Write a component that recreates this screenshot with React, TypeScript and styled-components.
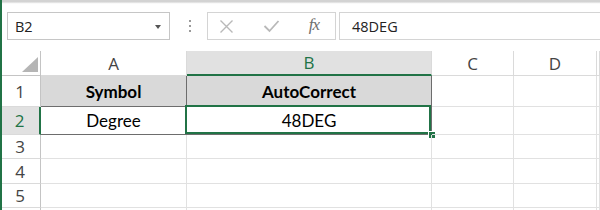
import React from "react";
import styled, { createGlobalStyle, css } from "styled-components";

const green = "#217346";
const grid = "#e1e1e1";
const tableLine = "#6d6d6d";

const GlobalStyle = createGlobalStyle`
  html, body {
    margin: 0;
    padding: 0;
    background: #fff;
    width: 600px;
    height: 210px;
    overflow: hidden;
  }
`;

const Window = styled.div`
  height: 210px;
  border-left: 2px solid ${green};
  background: #fff;
  overflow: hidden;
`;

const TopEdge = styled.div`
  height: 4px;
  background: linear-gradient(#d3d3d3, #d3d3d3 2px, #f4f4f4 3px, #fff);
`;

const FormulaBar = styled.div`
  display: flex;
  align-items: center;
  height: 28px;
  margin-top: 8px;
  padding-left: 5px;
  font-family: "Open Sans", "Noto Sans", sans-serif;
  font-size: 14.5px;
  color: #222;
`;

const NameBox = styled.div`
  box-sizing: border-box;
  width: 163px;
  height: 28px;
  border: 1px solid #c6c6c6;
  display: flex;
  align-items: center;
  justify-content: space-between;
  padding: 0 8px 0 7px;
`;

const DropArrow = styled.div`
  width: 0;
  height: 0;
  border-left: 3.5px solid transparent;
  border-right: 3.5px solid transparent;
  border-top: 4px solid #555;
  margin-top: 1px;
`;

const Grip = styled.div`
  width: 35px;
  display: flex;
  flex-direction: column;
  align-items: center;
  gap: 3px;
  padding-left: 2px;
`;

const GripDot = styled.span`
  width: 2px;
  height: 2px;
  background: #9a9a9a;
`;

const FxButtons = styled.div`
  box-sizing: border-box;
  width: 129px;
  height: 28px;
  border: 1px solid #d4d4d4;
  display: flex;
  align-items: center;
  padding: 0 16px 0 11px;
  justify-content: space-between;
`;

const FxLabel = styled.span`
  font-family: "Liberation Serif", "DejaVu Serif", serif;
  font-style: italic;
  font-size: 17px;
  color: #6e6e6e;
  letter-spacing: -1px;
  margin-top: -2px;
`;

const FormulaInput = styled.div`
  box-sizing: border-box;
  flex: 1;
  height: 28px;
  margin-left: 3px;
  border: 1px solid #d4d4d4;
  border-right: none;
  display: flex;
  align-items: center;
  padding-left: 12px;
`;

const Sheet = styled.div`
  margin-top: 11px;
  display: grid;
  grid-template-columns: 39px 146px 245px 82px 83px 1fr;
  grid-template-rows: 25px 31px 28px 24px 25px 24px 10px;
`;

const HeadCell = styled.div<{ $active?: boolean; $row?: boolean }>`
  box-sizing: border-box;
  display: flex;
  align-items: center;
  justify-content: center;
  font-family: "Open Sans", "Noto Sans", sans-serif;
  font-size: 17px;
  color: #444;
  background: #fff;
  border-right: 1px solid #dadada;
  border-bottom: 1px solid #dadada;
  ${(p) =>
    p.$row &&
    css`
      border-right: 1px solid #c4c4c4;
      padding-right: 2px;
    `}
  ${(p) =>
    p.$active &&
    css`
      background: #e1e1e1;
      color: ${green};
    `}
  ${(p) =>
    p.$active &&
    !p.$row &&
    css`
      border-bottom: 2px solid ${green};
    `}
  ${(p) =>
    p.$active &&
    p.$row &&
    css`
      border-right: 2px solid ${green};
    `}
`;

const Corner = styled(HeadCell)`
  align-items: flex-end;
  justify-content: flex-end;
  padding: 0 2px 3px 0;
  border-bottom: 1px solid #c4c4c4;
  border-right: 1px solid #c4c4c4;
`;

const Cell = styled.div<{ $head?: boolean; $boxed?: boolean }>`
  box-sizing: border-box;
  position: relative;
  display: flex;
  align-items: center;
  justify-content: center;
  font-family: "Lato", "Open Sans", sans-serif;
  font-size: 17px;
  color: #000;
  border-right: 1px solid ${grid};
  border-bottom: 1px solid ${grid};
  ${(p) =>
    p.$head &&
    css`
      background: #d9d9d9;
      font-weight: 700;
    `}
  ${(p) =>
    p.$boxed &&
    css`
      border-right-color: ${tableLine};
      border-bottom-color: ${tableLine};
    `}
`;

const Selection = styled.div`
  position: absolute;
  left: -2px;
  top: -2px;
  right: 0;
  bottom: 0;
  border: 2px solid ${green};
  pointer-events: none;
`;

const FillHandle = styled.div`
  position: absolute;
  right: -4px;
  bottom: -4px;
  width: 6px;
  height: 6px;
  background: ${green};
  border-top: 1px solid #fff;
  border-left: 1px solid #fff;
`;

const Icon = ({ kind }: { kind: "x" | "check" }) =>
  kind === "x" ? (
    <svg width="15" height="15" viewBox="0 0 15 15">
      <path d="M1.5 1.5 L13.5 13.5 M13.5 1.5 L1.5 13.5" stroke="#b9b9b9" strokeWidth="1.4" fill="none" />
    </svg>
  ) : (
    <svg width="17" height="14" viewBox="0 0 17 14">
      <path d="M1.5 7 L6.5 12 L15.5 2" stroke="#b9b9b9" strokeWidth="1.8" fill="none" />
    </svg>
  );

const columns = ["A", "B", "C", "D", ""];
const rows = ["3", "4", "5", ""];

export default function App() {
  return (
    <>
      <GlobalStyle />
      <Window>
        <TopEdge />
        <FormulaBar>
          <NameBox>
            <span>B2</span>
            <DropArrow />
          </NameBox>
          <Grip>
            <GripDot />
            <GripDot />
            <GripDot />
          </Grip>
          <FxButtons>
            <Icon kind="x" />
            <Icon kind="check" />
            <FxLabel>fx</FxLabel>
          </FxButtons>
          <FormulaInput>48DEG</FormulaInput>
        </FormulaBar>
        <Sheet>
          <Corner>
            <svg width="16" height="15" viewBox="0 0 16 15">
              <polygon points="16,0 16,15 0,15" fill="#b5b5b5" />
            </svg>
          </Corner>
          {columns.map((c) => (
            <HeadCell key={c || "end"} $active={c === "B"}>
              {c}
            </HeadCell>
          ))}

          <HeadCell $row>1</HeadCell>
          <Cell $head $boxed>Symbol</Cell>
          <Cell $head $boxed>AutoCorrect</Cell>
          <Cell />
          <Cell />
          <Cell />

          <HeadCell $row $active>2</HeadCell>
          <Cell $boxed>Degree</Cell>
          <Cell $boxed>
            48DEG
            <Selection />
            <FillHandle />
          </Cell>
          <Cell />
          <Cell />
          <Cell />

          {rows.map((r, i) => (
            <React.Fragment key={i}>
              <HeadCell $row>{r}</HeadCell>
              <Cell />
              <Cell />
              <Cell />
              <Cell />
              <Cell />
            </React.Fragment>
          ))}
        </Sheet>
      </Window>
    </>
  );
}
